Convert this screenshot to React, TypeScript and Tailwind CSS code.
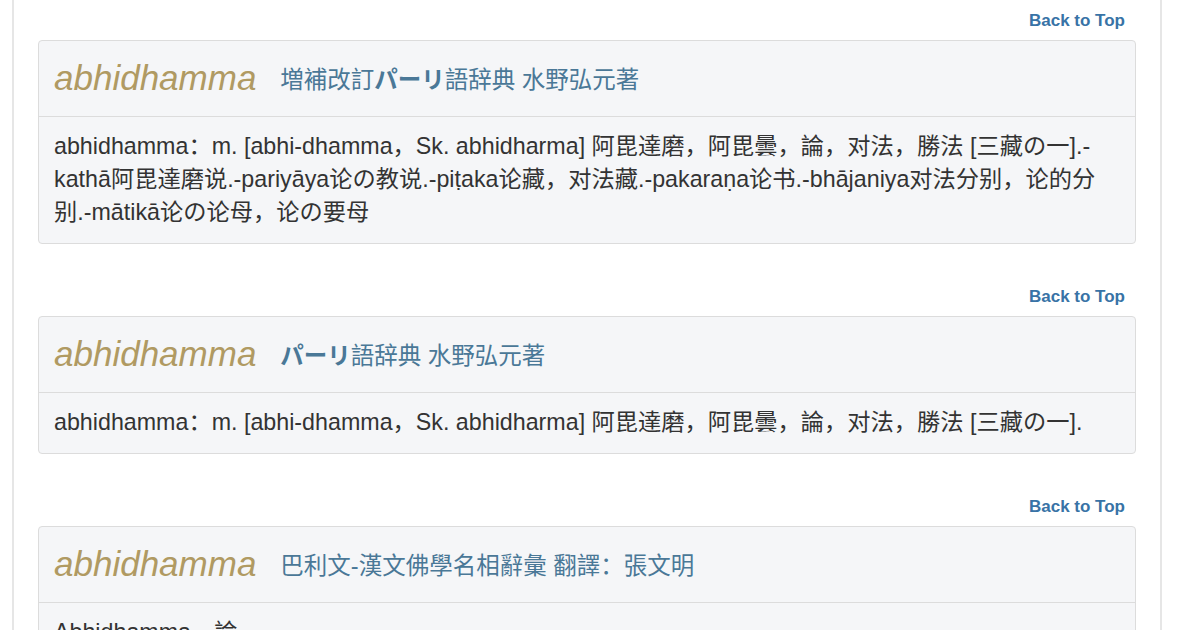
import React from "react";

const entries = [
  {
    id: 1,
    word: "abhidhamma",
    source: (
      <>
        増補改訂<span className="font-bold">パーリ</span>語辞典 水野弘元著
      </>
    ),
    text: "abhidhamma：m. [abhi-dhamma，Sk. abhidharma] 阿毘達磨，阿毘曇，論，对法，勝法 [三藏の一].-kathā阿毘達磨说.-pariyāya论の教说.-piṭaka论藏，对法藏.-pakaraṇa论书.-bhājaniya对法分别，论的分别.-mātikā论の论母，论の要母",
  },
  {
    id: 2,
    word: "abhidhamma",
    source: (
      <>
        <span className="font-bold">パーリ</span>語辞典 水野弘元著
      </>
    ),
    text: "abhidhamma：m. [abhi-dhamma，Sk. abhidharma] 阿毘達磨，阿毘曇，論，对法，勝法 [三藏の一].",
  },
  {
    id: 3,
    word: "abhidhamma",
    source: <>巴利文-漢文佛學名相辭彙 翻譯：張文明</>,
    text: "Abhidhamma，論",
  },
];

const sans = "font-['Liberation_Sans','Noto_Sans_CJK_SC',sans-serif]";

const App = () => {
  return (
    <div className={`w-[1200px] h-[630px] overflow-hidden bg-white ${sans}`}>
      <div className="ml-[12px] w-[1150px] min-h-full border-x-2 border-[#e6e6e6] px-[24px] pt-[10px]">
        {entries.map((entry) => (
          <div key={entry.id} className="mb-[42px]">
            <div className="text-right pr-[11px] mb-[8px] leading-[22px]">
              <a href="#top" className="text-[17px] font-bold text-[#3873a6]">
                Back to Top
              </a>
            </div>

            <div className="border border-[#dcdcdc] rounded-[4px] bg-[#f5f6f8]">
              <div className="h-[76px] flex items-center px-[15px] border-b border-[#dcdcdc]">
                <span className="italic text-[35px] text-[#b09a62] mr-[24px]">
                  {entry.word}
                </span>
                <span className="text-[23.5px] text-[#4a7897] pt-[4px]">
                  {entry.source}
                </span>
              </div>
              <div className="px-[15px] pt-[13px] pb-[14px] text-[23.25px] leading-[33px] text-[#333]">
                {entry.text}
              </div>
            </div>
          </div>
        ))}
      </div>
    </div>
  );
};

export default App;
